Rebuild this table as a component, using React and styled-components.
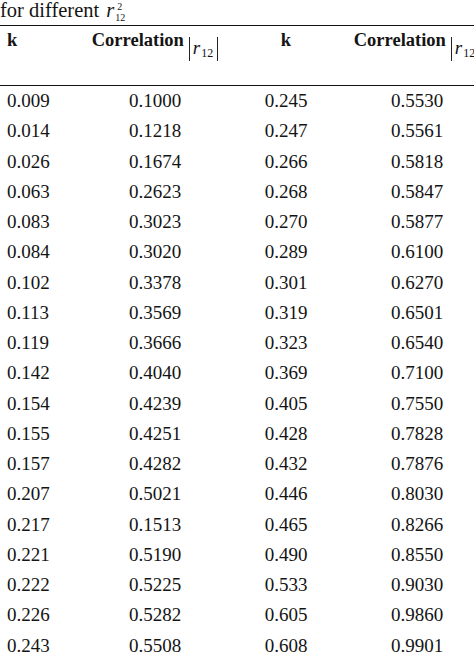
import React from "react";
import styled, { createGlobalStyle } from "styled-components";

const Global = createGlobalStyle`
  html, body { margin: 0; padding: 0; background: #fff; }
  body { overflow: hidden; width: 474px; height: 656px; }
  #root { width: 474px; height: 656px; overflow: hidden; }
`;

const Page = styled.div`
  font-family: "Liberation Serif", "Times New Roman", serif;
  color: #141414;
  width: 474px;
  height: 656px;
  overflow: hidden;
`;

const Title = styled.div`
  height: 25px;
  font-size: 20.5px;
  line-height: 20px;
  white-space: nowrap;
  display: flex;
  align-items: flex-end;
  box-sizing: border-box;
`;

const TitleText = styled.span`
  position: relative;
  top: -5px;
`;

const Var = styled.span`
  font-style: italic;
  margin-left: 7px;
  position: relative;
  top: -5px;
`;

const SupSub = styled.span`
  display: inline-flex;
  flex-direction: column;
  font-size: 10px;
  line-height: 11px;
  position: relative;
  top: -2px;
  margin-left: 1px;
  span:first-child { padding-left: 2px; }
`;

const Table = styled.div`
  width: 482px;
  border-top: 1.6px solid #111;
`;

const Grid = styled.div`
  display: grid;
  grid-template-columns: 90px 130px 132px 130px;
`;

const HeadRow = styled(Grid)`
  height: 60px;
  border-bottom: 1.6px solid #111;
  box-sizing: border-box;
  font-weight: bold;
  font-size: 18.5px;
  line-height: 20px;
  padding-top: 4px;
`;

const Cell = styled.div`
  text-align: ${(p) => (p.$left ? "left" : "center")};
  padding-left: ${(p) => (p.$left ? "7px" : "0")};
  white-space: nowrap;
`;

const Abs = styled.span`
  display: inline-block;
  border-left: 1px solid #222;
  border-right: 1px solid #222;
  height: 24px;
  vertical-align: -8px;
  padding: 0 4px 0 3px;
  margin-left: 5px;
  font-weight: normal;
  line-height: 22px;
  i { font-size: 19px; }
  sub { font-size: 12px; vertical-align: -3px; line-height: 0; margin-left: 1px; }
`;

const Body = styled.div`
  padding-top: 0;
`;

const Row = styled(Grid)`
  height: 30.25px;
  font-size: 19px;
  line-height: 30.25px;
`;

const data = [
  ["0.009", "0.1000", "0.245", "0.5530"],
  ["0.014", "0.1218", "0.247", "0.5561"],
  ["0.026", "0.1674", "0.266", "0.5818"],
  ["0.063", "0.2623", "0.268", "0.5847"],
  ["0.083", "0.3023", "0.270", "0.5877"],
  ["0.084", "0.3020", "0.289", "0.6100"],
  ["0.102", "0.3378", "0.301", "0.6270"],
  ["0.113", "0.3569", "0.319", "0.6501"],
  ["0.119", "0.3666", "0.323", "0.6540"],
  ["0.142", "0.4040", "0.369", "0.7100"],
  ["0.154", "0.4239", "0.405", "0.7550"],
  ["0.155", "0.4251", "0.428", "0.7828"],
  ["0.157", "0.4282", "0.432", "0.7876"],
  ["0.207", "0.5021", "0.446", "0.8030"],
  ["0.217", "0.1513", "0.465", "0.8266"],
  ["0.221", "0.5190", "0.490", "0.8550"],
  ["0.222", "0.5225", "0.533", "0.9030"],
  ["0.226", "0.5282", "0.605", "0.9860"],
  ["0.243", "0.5508", "0.608", "0.9901"],
];

const Corr = () => (
  <>
    Correlation
    <Abs>
      <i>r</i>
      <sub>12</sub>
    </Abs>
  </>
);

export default function App() {
  return (
    <Page>
      <Global />
      <Title>
        <TitleText>for different</TitleText>
        <Var>r</Var>
        <SupSub>
          <span>2</span>
          <span>12</span>
        </SupSub>
      </Title>
      <Table>
        <HeadRow>
          <Cell $left>k</Cell>
          <Cell><Corr /></Cell>
          <Cell>k</Cell>
          <Cell><Corr /></Cell>
        </HeadRow>
        <Body>
          {data.map((r, i) => (
            <Row key={i}>
              <Cell $left>{r[0]}</Cell>
              <Cell>{r[1]}</Cell>
              <Cell>{r[2]}</Cell>
              <Cell>{r[3]}</Cell>
            </Row>
          ))}
        </Body>
      </Table>
    </Page>
  );
}
